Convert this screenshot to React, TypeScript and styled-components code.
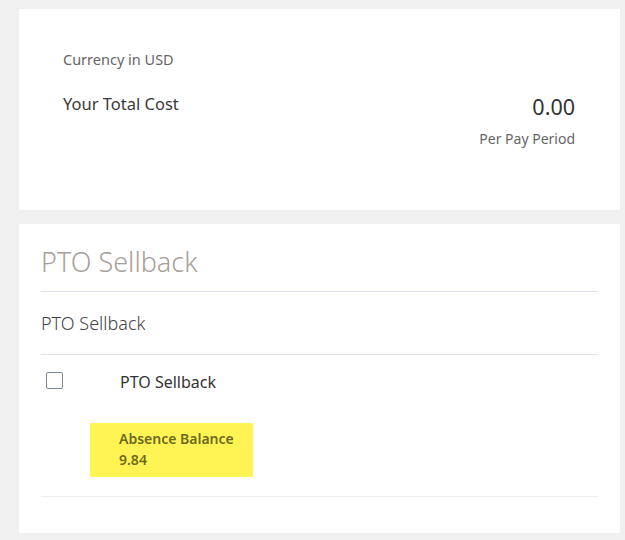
import * as React from 'react'
import styled, { createGlobalStyle } from 'styled-components'

const GlobalStyle = createGlobalStyle`
  html, body {
    margin: 0;
    padding: 0;
    background: #f0f0f0;
    font-family: 'Noto Sans', 'Open Sans', sans-serif;
  }
`

const Page = styled.div`
  display: flex;
  flex-direction: column;
  gap: 14px;
  padding: 9px 5px 0 19px;
`

const Card = styled.section<{ $height: number }>`
  background: #fff;
  height: ${p => p.$height}px;
  box-sizing: border-box;
`

const CostCard = styled(Card)`
  padding: 40px 45px 0 44px;
`

const Currency = styled.div`
  font-size: 14.5px;
  line-height: 20px;
  color: #666;
`

const CostRow = styled.div`
  display: flex;
  justify-content: space-between;
  align-items: flex-start;
  margin-top: 24px;
`

const CostLabel = styled.div`
  font-size: 16.5px;
  line-height: 22px;
  color: #3a3a3a;
`

const CostValue = styled.div`
  display: flex;
  flex-direction: column;
  align-items: flex-end;
`

const Amount = styled.div`
  font-size: 21.5px;
  line-height: 28px;
  color: #333;
`

const Period = styled.div`
  font-size: 14px;
  line-height: 20px;
  color: #666;
  margin-top: 8px;
`

const SellbackCard = styled(Card)`
  padding: 18px 22px 0 22px;
`

const Title = styled.h2`
  margin: 0;
  font-size: 27px;
  font-weight: 300;
  line-height: 40px;
  color: #a8a19a;
  padding-bottom: 9px;
  border-bottom: 1px solid #dde3ea;
`

const SubTitle = styled.h3`
  margin: 0;
  font-size: 18px;
  font-weight: 300;
  line-height: 26px;
  color: #444;
  padding: 18px 0 18px;
  border-bottom: 1px solid #dde3ea;
`

const OptionBlock = styled.div`
  padding: 17px 0 19px 5px;
  border-bottom: 1px solid #eceff2;
`

const OptionRow = styled.label`
  display: flex;
  align-items: flex-start;
  gap: 57px;
`

const Box = styled.span`
  display: block;
  width: 17px;
  height: 17px;
  box-sizing: border-box;
  border: 1px solid #7d8893;
  border-radius: 2px;
  flex-shrink: 0;
`

const OptionLabel = styled.span`
  font-size: 16px;
  line-height: 24px;
  color: #333;
  margin-top: -2px;
`

const Balance = styled.div`
  margin: 29px 0 0 44px;
  width: 163px;
  height: 54px;
  box-sizing: border-box;
  background: #fff453;
  padding: 5px 0 0 29px;
  color: #6b6a22;
  font-size: 14px;
  font-weight: 600;
  line-height: 21px;
`

export default function App() {
  return (
    <>
      <GlobalStyle />
      <Page>
        <CostCard $height={201}>
          <Currency>Currency in USD</Currency>
          <CostRow>
            <CostLabel>Your Total Cost</CostLabel>
            <CostValue>
              <Amount>0.00</Amount>
              <Period>Per Pay Period</Period>
            </CostValue>
          </CostRow>
        </CostCard>
        <SellbackCard $height={309}>
          <Title>PTO Sellback</Title>
          <SubTitle>PTO Sellback</SubTitle>
          <OptionBlock>
            <OptionRow>
              <Box />
              <OptionLabel>PTO Sellback</OptionLabel>
            </OptionRow>
            <Balance>
              <div>Absence Balance</div>
              <div>9.84</div>
            </Balance>
          </OptionBlock>
        </SellbackCard>
      </Page>
    </>
  )
}
